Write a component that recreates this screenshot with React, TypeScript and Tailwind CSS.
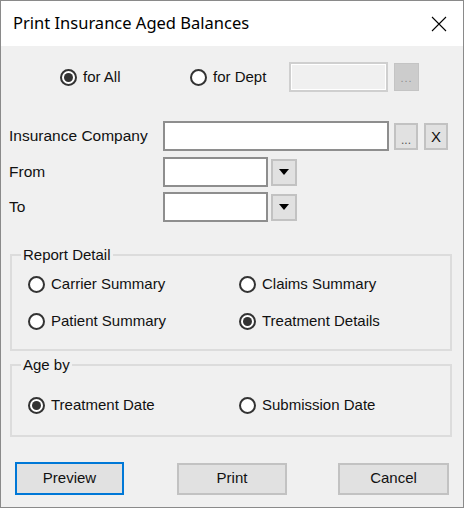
import React from "react";

const body = { fontFamily: '"Liberation Sans", Arial, sans-serif' };

function Radio({ checked, label, className = "" }: { checked?: boolean; label: string; className?: string }) {
  return (
    <div className={"flex items-center " + className}>
      <div className="w-[17px] h-[17px] rounded-full border-2 border-[#333333] bg-white flex items-center justify-center shrink-0">
        {checked && <div className="w-[9px] h-[9px] rounded-full bg-[#333333]" />}
      </div>
      <span className="ml-[6px] text-[15px] leading-[18px] text-[#111]">{label}</span>
    </div>
  );
}

function Btn({ children, className = "" }: { children?: React.ReactNode; className?: string }) {
  return (
    <div className={"flex items-center justify-center bg-[#e1e1e1] border-2 border-[#c2c2c2] shrink-0 " + className}>
      {children}
    </div>
  );
}

function DropBtn() {
  return (
    <Btn className="w-[26px] h-[27px] ml-[3px]">
      <svg width="10" height="6" viewBox="0 0 10 6">
        <path d="M0 0 H10 L5 6 Z" fill="#000" />
      </svg>
    </Btn>
  );
}

export default function App() {
  return (
    <div className="w-[464px] h-[508px] border border-[#8a8a8a] bg-[#f0f0f0] flex flex-col overflow-hidden" style={body}>
      <div className="h-[45px] bg-white flex items-center justify-between pl-[12px] pr-[16px] shrink-0">
        <span className="text-[16.5px] text-black" style={{ fontFamily: '"Noto Sans", "Open Sans", sans-serif' }}>
          Print Insurance Aged Balances
        </span>
        <svg width="16" height="16" viewBox="0 0 16 16">
          <path d="M1 1 L15 15 M15 1 L1 15" stroke="#000" strokeWidth="1.1" />
        </svg>
      </div>

      <div className="flex items-center h-[30px] mt-[16px] pl-[59px]">
        <Radio checked label="for All" className="w-[130px]" />
        <Radio label="for Dept" className="w-[99px]" />
        <div className="w-[99px] h-[30px] border-2 border-[#cfcfcf] bg-[#f0f0f0] shadow-[inset_0_0_0_1px_#ffffff]" />
        <div className="w-[25px] h-[28px] ml-[6px] bg-[#cccccc] border border-[#c4c4c4] flex items-end justify-center pb-[6px]">
          <span className="text-[11px] leading-none text-[#8c8c8c] tracking-[1px]">...</span>
        </div>
      </div>

      <div className="flex items-center h-[30px] mt-[29px] pl-[8px]">
        <span className="w-[154px] text-[15.5px] text-[#111]">Insurance Company</span>
        <div className="w-[226px] h-[30px] bg-white border-2 border-[#8e8e8e]" />
        <Btn className="w-[24px] h-[27px] ml-[5px]">
          <span className="text-[12px] leading-none text-[#555] mt-[8px]">...</span>
        </Btn>
        <Btn className="w-[24px] h-[27px] ml-[6px]">
          <span className="text-[15px] leading-none text-[#111]">X</span>
        </Btn>
      </div>

      <div className="flex items-center h-[30px] mt-[6px] pl-[8px]">
        <span className="w-[154px] text-[15.5px] text-[#111]">From</span>
        <div className="w-[105px] h-[30px] bg-white border-2 border-[#8e8e8e]" />
        <DropBtn />
      </div>

      <div className="flex items-center h-[30px] mt-[5px] pl-[8px]">
        <span className="w-[154px] text-[15.5px] text-[#111]">To</span>
        <div className="w-[105px] h-[30px] bg-white border-2 border-[#8e8e8e]" />
        <DropBtn />
      </div>

      <fieldset className="ml-[9px] mt-[24px] w-[442px] border-2 border-[#dcdcdc] pt-[11px] pb-[19px]">
        <legend className="ml-[9px] px-[2px] text-[15px] leading-[18px] text-[#111]">Report Detail</legend>
        <div className="grid grid-cols-[211px_1fr] gap-y-[19px] pl-[16px]">
          <Radio label="Carrier Summary" />
          <Radio label="Claims Summary" />
          <Radio label="Patient Summary" />
          <Radio checked label="Treatment Details" />
        </div>
      </fieldset>

      <fieldset className="ml-[9px] mt-[5px] w-[442px] border-2 border-[#dcdcdc] pt-[22px] pb-[21px]">
        <legend className="ml-[9px] px-[2px] text-[15px] leading-[18px] text-[#111]">Age by</legend>
        <div className="grid grid-cols-[211px_1fr] pl-[16px]">
          <Radio checked label="Treatment Date" />
          <Radio label="Submission Date" />
        </div>
      </fieldset>

      <div className="flex items-center mt-[25px] pl-[14px]">
        <div className="w-[109px] h-[33px] bg-[#e1e1e1] border-2 border-[#0078d7] flex items-center justify-center">
          <span className="text-[15px] text-[#111]">Preview</span>
        </div>
        <Btn className="w-[110px] h-[32px] ml-[53px]">
          <span className="text-[15px] text-[#111]">Print</span>
        </Btn>
        <Btn className="w-[111px] h-[32px] ml-[51px]">
          <span className="text-[15px] text-[#111]">Cancel</span>
        </Btn>
      </div>
    </div>
  );
}
